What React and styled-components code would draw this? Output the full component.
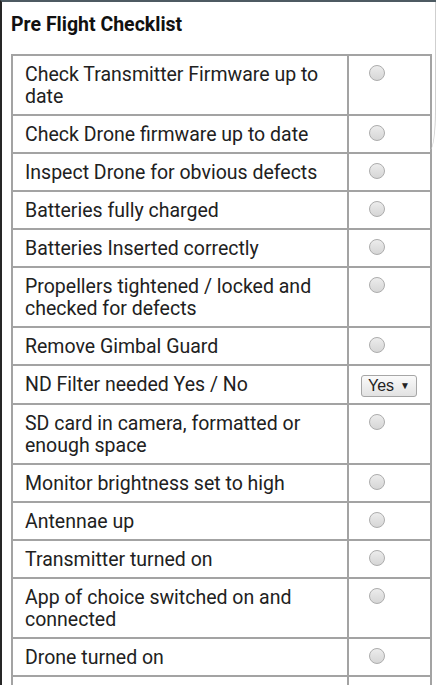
import React from 'react';
import styled, { createGlobalStyle } from 'styled-components';

const GlobalStyle = createGlobalStyle`
  html, body {
    margin: 0;
    padding: 0;
    background: #fff;
    overflow: hidden;
  }
  body {
    font-family: Roboto, "Noto Sans", "Liberation Sans", sans-serif;
    color: #212121;
  }
`;

const Page = styled.div`
  position: relative;
  width: 436px;
  height: 685px;
  box-sizing: border-box;
  border-top: 2px solid #4d5a62;
  border-left: 2px solid #262626;
  background: #fff;
  overflow: hidden;

  /* edge of the card behind, only its upper part shows */
  &::after {
    content: '';
    position: absolute;
    top: 0;
    right: 0;
    width: 6px;
    height: 148px;
    border-right: 1px solid #cfcfcf;
    border-bottom-right-radius: 6px 40px;
  }
`;

const Title = styled.h1`
  margin: 0;
  padding: 10px 9px 0;
  height: 52px;
  box-sizing: border-box;
  font-size: 19.5px;
  line-height: 26px;
  font-weight: 700;
  color: #111;
`;

const Table = styled.table`
  margin-left: 9px;
  width: 421px;
  border-collapse: collapse;
  table-layout: fixed;
`;

const Cell = styled.td`
  border: 2px solid #a3a3a3;
  padding: 8px 12px 6px;
  vertical-align: top;
  font-size: 19.5px;
  line-height: 22px;
  color: #212121;
  width: ${p => (p.narrow ? '57px' : 'auto')};
`;

const Radio = styled.span`
  display: block;
  width: 16px;
  height: 16px;
  margin: 1px 0 0 8px;
  box-sizing: border-box;
  border-radius: 50%;
  border: 1px solid #adadad;
  background: linear-gradient(#ececec, #d6d6d6);
`;

const Select = styled.span`
  display: inline-flex;
  align-items: center;
  gap: 6px;
  height: 22px;
  box-sizing: border-box;
  margin-top: -1px;
  padding: 0 6px;
  border: 1px solid #a6a6a6;
  border-radius: 3px;
  background: linear-gradient(#fafafa, #e2e2e2);
  font-family: "Liberation Sans", Arial, sans-serif;
  font-size: 16px;
  line-height: 20px;
  color: #222;
`;

const Arrow = styled.span`
  font-size: 10px;
  line-height: 10px;
`;

const items = [
  'Check Transmitter Firmware up to date',
  'Check Drone firmware up to date',
  'Inspect Drone for obvious defects',
  'Batteries fully charged',
  'Batteries Inserted correctly',
  'Propellers tightened / locked and checked for defects',
  'Remove Gimbal Guard',
  { label: 'ND Filter needed Yes / No', select: 'Yes' },
  'SD card in camera, formatted or enough space',
  'Monitor brightness set to high',
  'Antennae up',
  'Transmitter turned on',
  'App of choice switched on and connected',
  'Drone turned on',
  'Camera settings checked',
  'Home point set',
];

const App = () => (
  <>
    <GlobalStyle />
    <Page>
      <Title>Pre Flight Checklist</Title>
      <Table>
        <tbody>
          {items.map(item => {
            const label = typeof item === 'string' ? item : item.label;
            return (
              <tr key={label}>
                <Cell>{label}</Cell>
                <Cell narrow>
                  {item.select ? (
                    <Select>
                      {item.select}
                      <Arrow>▼</Arrow>
                    </Select>
                  ) : (
                    <Radio />
                  )}
                </Cell>
              </tr>
            );
          })}
        </tbody>
      </Table>
    </Page>
  </>
);

export default App;
